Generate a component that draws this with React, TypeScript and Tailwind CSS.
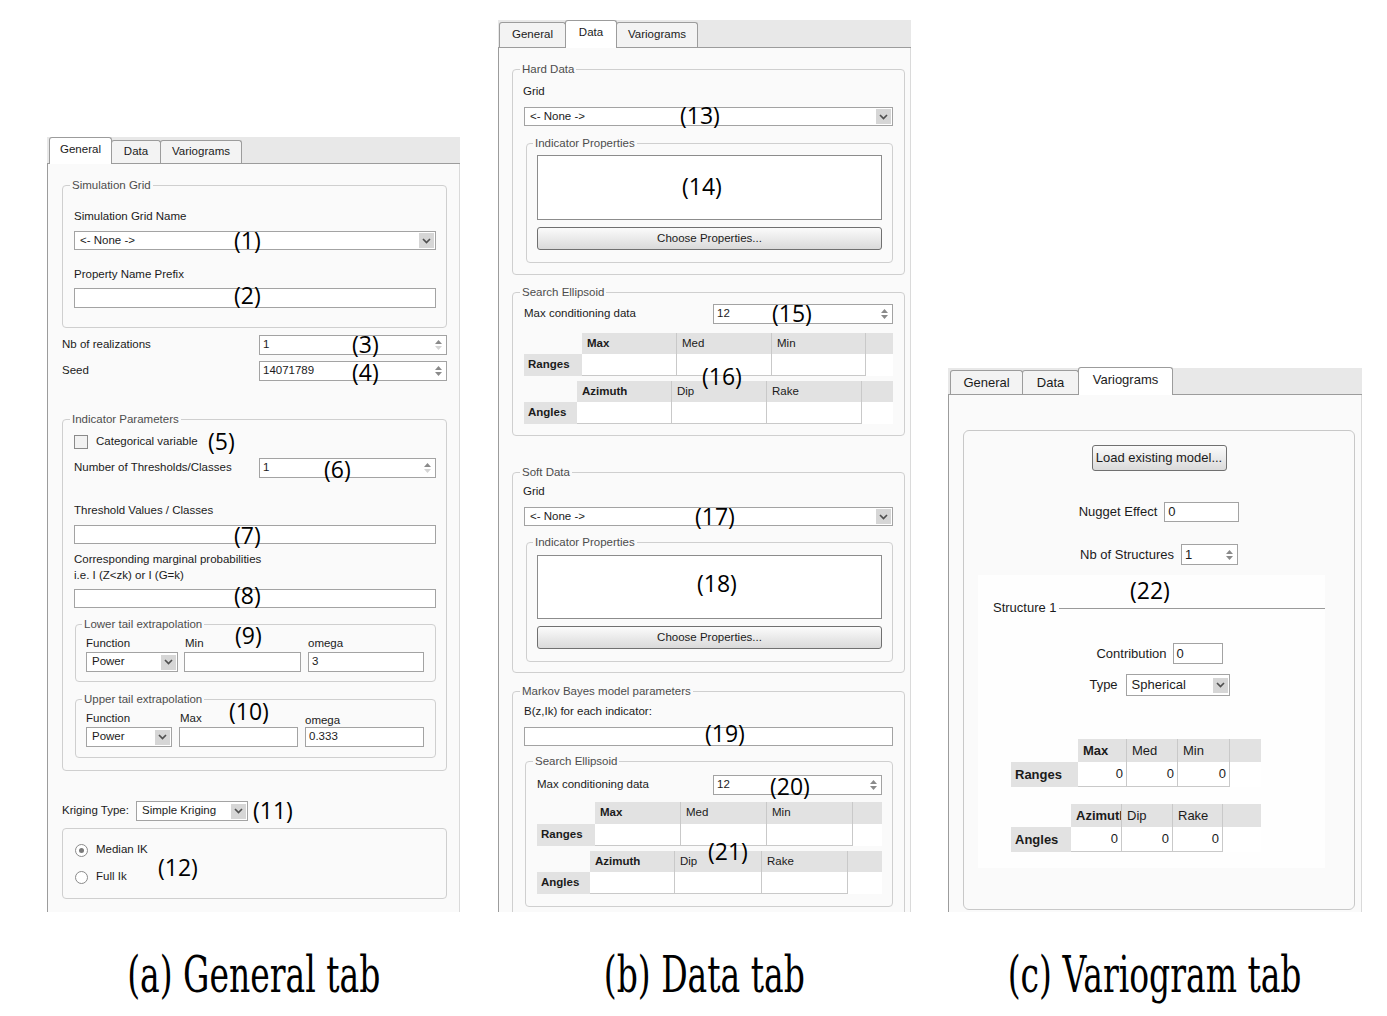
import React from 'react'

// small win-xp style widgets used by the three dialog tabs

function Chevron() {
  return (
    <svg width="9" height="6" viewBox="0 0 9 6">
      <path d="M1 1l3.5 3.5L8 1" stroke="#505050" strokeWidth="1.7" fill="none" />
    </svg>
  )
}

function Combo({ text, className = '' }: { text: string; className?: string }) {
  return (
    <div className={`flex items-center border border-[#a3a3a3] bg-white ${className}`}>
      <span className="flex-1 truncate pl-[5px]">{text}</span>
      <span className="mr-[1px] flex h-[15px] w-[15px] items-center justify-center bg-[#d6d6d6]">
        <Chevron />
      </span>
    </div>
  )
}

function Spin({ value, className = '', downOff }: { value: string; className?: string; downOff?: boolean }) {
  return (
    <div className={`flex items-center border border-[#a3a3a3] bg-white ${className}`}>
      <span className="flex-1 pl-[3px]">{value}</span>
      <svg width="9" height="14" viewBox="0 0 9 14" className="mr-[3px]">
        <path d="M4.5 2L8 6H1Z" fill="#8a8a8a" />
        <path d="M4.5 12L8 8H1Z" fill={downOff ? '#d4d4d4' : '#8a8a8a'} />
      </svg>
    </div>
  )
}

function Field({ value, className = '' }: { value?: string; className?: string }) {
  return <div className={`flex items-center border border-[#a3a3a3] bg-white pl-[3px] ${className}`}>{value}</div>
}

function Button({ label, className = '' }: { label: string; className?: string }) {
  return (
    <div className={`flex items-center justify-center rounded-[3px] border border-[#707070] bg-linear-to-b from-[#fbfbfb] to-[#dadada] ${className}`}>
      {label}
    </div>
  )
}

function Group({ title, legend, className = '', children }: { title: string; legend: string; className?: string; children: React.ReactNode }) {
  return (
    <fieldset className={`rounded-[4px] border border-[#cfcfcf] ${className}`}>
      <legend className={`px-[2px] leading-[14px] text-[#4d4d4d] ${legend}`}>{title}</legend>
      {children}
    </fieldset>
  )
}

type Col = { head: string; w: string }

function PropTable({ label, labelW, cols, fillW, headH, rowH, values }: {
  label: string
  labelW: string
  cols: Col[]
  fillW: string
  headH: string
  rowH: string
  values?: string[]
}) {
  return (
    <div>
      <div className={`flex ${headH}`}>
        <div className={labelW} />
        {cols.map((c, i) => (
          <div key={c.head} className={`${c.w} flex items-center overflow-hidden whitespace-nowrap border-r border-[#c9c9c9] bg-[#e2e2e2] pl-[5px] ${i === 0 ? 'font-bold' : ''}`}>
            {c.head}
          </div>
        ))}
        <div className={`${fillW} bg-[#e2e2e2]`} />
      </div>
      <div className={`flex ${rowH}`}>
        <div className={`${labelW} flex items-center bg-[#e2e2e2] pl-[4px] font-bold`}>{label}</div>
        {cols.map((c, i) => (
          <div key={c.head} className={`${c.w} flex items-center justify-end border-r border-b border-[#c9c9c9] bg-white pr-[3px]`}>
            {values?.[i]}
          </div>
        ))}
        <div className={`${fillW} bg-white`} />
      </div>
    </div>
  )
}

function Tabs({ active, widths, strip, on, off, pl }: { active: number; widths: string[]; strip: string; on: string; off: string; pl: string }) {
  const labels = ['General', 'Data', 'Variograms']
  return (
    <div className={`flex items-end border-b border-[#9c9c9c] bg-[#e8e8e8] ${strip} ${pl}`}>
      {labels.map((l, i) => (
        <div
          key={l}
          className={`${widths[i]} ${i > 0 ? '-ml-px' : ''} ${i === active ? `relative z-10 -mb-px bg-white pb-[3px] ${on}` : `bg-[#f3f3f3] ${off}`} flex items-center justify-center rounded-t-[3px] border border-b-0 border-[#9c9c9c]`}
        >
          {l}
        </div>
      ))}
    </div>
  )
}

function Mark({ n, className }: { n: number; className: string }) {
  return (
    <span className={`absolute font-['Open_Sans',sans-serif] text-[23px] leading-[24px] text-black ${className}`}>({n})</span>
  )
}

function Radio({ label, checked }: { label: string; checked?: boolean }) {
  return (
    <div className="flex h-[14px] items-center">
      <span className="flex h-[13px] w-[13px] items-center justify-center rounded-full border border-[#8a8a8a] bg-white">
        {checked && <span className="h-[5px] w-[5px] rounded-full bg-[#7a7a7a]" />}
      </span>
      <span className="ml-[8px]">{label}</span>
    </div>
  )
}

function GeneralTab() {
  return (
    <div className="relative flex h-[775px] w-[413px] flex-col">
      <Tabs
        active={0}
        widths={['w-[63px]', 'w-[50px]', 'w-[82px]']}
        strip="h-[27px]"
        on="h-[27px]"
        off="h-[23px]"
        pl="pl-[2px]"
      />
      <div className="flex-1 border-x border-l-[#9c9c9c] border-r-[#dadada] bg-[#fafafa] pl-[14px] pr-[12px]">
        <Group title="Simulation Grid" legend="ml-[7px]" className="mt-[14px]">
          <div className="pl-[11px] pr-[10px] pt-[17px] pb-[19px]">
            <div className="leading-[14px]">Simulation Grid Name</div>
            <Combo text="<- None ->" className="mt-[8px] h-[19px]" />
            <div className="mt-[17px] leading-[14px]">Property Name Prefix</div>
            <Field className="mt-[7px] h-[20px]" />
          </div>
        </Group>
        <div className="mt-[7px] flex h-[20px] items-center">
          <span className="flex-1">Nb of realizations</span>
          <Spin value="1" downOff className="h-[20px] w-[188px]" />
        </div>
        <div className="mt-[6px] flex h-[20px] items-center">
          <span className="flex-1">Seed</span>
          <Spin value="14071789" className="h-[20px] w-[188px]" />
        </div>
        <Group title="Indicator Parameters" legend="ml-[7px]" className="mt-[31px]">
          <div className="pl-[11px] pr-[10px] pt-[9px] pb-[12px]">
            <div className="flex h-[14px] items-center">
              <span className="h-[14px] w-[14px] border border-[#8a8a8a] bg-[#f2f2f2]" />
              <span className="ml-[8px]">Categorical variable</span>
            </div>
            <div className="mt-[9px] flex h-[20px] items-center">
              <span className="flex-1">Number of Thresholds/Classes</span>
              <Spin value="1" downOff className="h-[20px] w-[177px]" />
            </div>
            <div className="mt-[25px] leading-[14px]">Threshold Values / Classes</div>
            <Field className="mt-[8px] h-[19px]" />
            <div className="mt-[7px] leading-[16px]">
              Corresponding marginal probabilities
              <br />
              i.e. I (Z&lt;zk) or I (G=k)
            </div>
            <Field className="mt-[6px] h-[19px]" />
            <Group title="Lower tail extrapolation" legend="ml-[6px]" className="mt-[9px] ml-[1px]">
              <div className="pl-[10px] pt-[6px] pb-[9px]">
                <div className="flex h-[14px] items-center">
                  <span className="w-[98px]">Function</span>
                  <span className="w-[124px] pl-[1px]">Min</span>
                  <span>omega</span>
                </div>
                <div className="mt-[1px] flex h-[20px] gap-[6px]">
                  <Combo text="Power" className="w-[92px]" />
                  <Field className="w-[117px]" />
                  <Field value="3" className="ml-[1px] w-[116px]" />
                </div>
              </div>
            </Group>
            <Group title="Upper tail extrapolation" legend="ml-[6px]" className="mt-[10px] ml-[1px]">
              <div className="pl-[10px] pt-[6px] pb-[10px]">
                <div className="flex h-[14px] items-center">
                  <span className="w-[93px]">Function</span>
                  <span className="w-[126px] pl-[1px]">Max</span>
                  <span className="pt-[3px]">omega</span>
                </div>
                <div className="mt-[1px] flex h-[20px] gap-[7px]">
                  <Combo text="Power" className="w-[86px]" />
                  <Field className="w-[119px]" />
                  <Field value="0.333" className="w-[119px]" />
                </div>
              </div>
            </Group>
          </div>
        </Group>
        <div className="mt-[30px] flex h-[20px] items-center">
          <span className="w-[74px]">Kriging Type:</span>
          <Combo text="Simple Kriging" className="h-[20px] w-[112px]" />
        </div>
        <div className="mt-[7px] h-[71px] rounded-[4px] border border-[#cfcfcf] pl-[12px] pt-[14px]">
          <Radio label="Median IK" checked />
          <div className="mt-[13px]">
            <Radio label="Full Ik" />
          </div>
        </div>
      </div>
      <Mark n={1} className="left-[187px] top-[91px]" />
      <Mark n={2} className="left-[187px] top-[146px]" />
      <Mark n={3} className="left-[305px] top-[195px]" />
      <Mark n={4} className="left-[305px] top-[223px]" />
      <Mark n={5} className="left-[161px] top-[292px]" />
      <Mark n={6} className="left-[277px] top-[320px]" />
      <Mark n={7} className="left-[187px] top-[386px]" />
      <Mark n={8} className="left-[187px] top-[446px]" />
      <Mark n={9} className="left-[188px] top-[486px]" />
      <Mark n={10} className="left-[182px] top-[562px]" />
      <Mark n={11} className="left-[206px] top-[661px]" />
      <Mark n={12} className="left-[111px] top-[718px]" />
    </div>
  )
}

function DataTab() {
  return (
    <div className="relative ml-[38px] flex h-[892px] w-[413px] flex-col overflow-hidden">
      <Tabs
        active={1}
        widths={['w-[67px]', 'w-[52px]', 'w-[82px]']}
        strip="h-[28px]"
        on="h-[28px]"
        off="h-[25px]"
        pl="pl-[1px]"
      />
      <div className="flex-1 border-x border-l-[#9c9c9c] border-r-[#dadada] bg-[#fafafa] pl-[13px] pr-[5px]">
        <Group title="Hard Data" legend="ml-[7px]" className="mt-[14px]">
          <div className="pl-[11px] pr-[11px] pt-[8px] pb-[11px]">
            <div className="-ml-px leading-[14px]">Grid</div>
            <Combo text="<- None ->" className="mt-[9px] h-[19px]" />
            <Group title="Indicator Properties" legend="ml-[6px]" className="mt-[10px] ml-[2px]">
              <div className="pl-[10px] pr-[10px] pt-[5px] pb-[12px]">
                <div className="h-[65px] border border-[#8c8c8c] bg-white" />
                <Button label="Choose Properties..." className="mt-[7px] h-[23px]" />
              </div>
            </Group>
          </div>
        </Group>
        <Group title="Search Ellipsoid" legend="ml-[7px]" className="mt-[10px]">
          <div className="pl-[11px] pr-[11px] pt-[5px] pb-[11px]">
            <div className="flex h-[20px] items-center">
              <span className="flex-1">Max conditioning data</span>
              <Spin value="12" className="h-[20px] w-[180px]" />
            </div>
            <div className="mt-[9px]">
              <PropTable
                label="Ranges"
                labelW="w-[58px]"
                cols={[{ head: 'Max', w: 'w-[95px]' }, { head: 'Med', w: 'w-[95px]' }, { head: 'Min', w: 'w-[94px]' }]}
                fillW="w-[27px]"
                headH="h-[21px]"
                rowH="h-[22px]"
              />
            </div>
            <div className="mt-[5px]">
              <PropTable
                label="Angles"
                labelW="w-[53px]"
                cols={[{ head: 'Azimuth', w: 'w-[95px]' }, { head: 'Dip', w: 'w-[95px]' }, { head: 'Rake', w: 'w-[95px]' }]}
                fillW="w-[31px]"
                headH="h-[21px]"
                rowH="h-[22px]"
              />
            </div>
          </div>
        </Group>
        <Group title="Soft Data" legend="ml-[7px]" className="mt-[29px]">
          <div className="pl-[11px] pr-[11px] pt-[5px] pb-[10px]">
            <div className="-ml-px leading-[14px]">Grid</div>
            <Combo text="<- None ->" className="mt-[9px] h-[19px]" />
            <Group title="Indicator Properties" legend="ml-[6px]" className="mt-[9px] ml-[2px]">
              <div className="pl-[10px] pr-[10px] pt-[6px] pb-[12px]">
                <div className="h-[64px] border border-[#8c8c8c] bg-white" />
                <Button label="Choose Properties..." className="mt-[7px] h-[23px]" />
              </div>
            </Group>
          </div>
        </Group>
        <Group title="Markov Bayes model parameters" legend="ml-[7px]" className="mt-[11px]">
          <div className="pl-[11px] pr-[11px] pt-[6px] pb-[12px]">
            <div className="leading-[14px]">B(z,Ik) for each indicator:</div>
            <Field className="mt-[9px] h-[19px]" />
            <Group title="Search Ellipsoid" legend="ml-[7px]" className="mt-[8px] ml-[1px]">
              <div className="pl-[11px] pr-[10px] pt-[7px] pb-[12px]">
                <div className="flex h-[20px] items-center">
                  <span className="flex-1">Max conditioning data</span>
                  <Spin value="12" className="h-[20px] w-[169px]" />
                </div>
                <div className="mt-[7px]">
                  <PropTable
                    label="Ranges"
                    labelW="w-[58px]"
                    cols={[{ head: 'Max', w: 'w-[86px]' }, { head: 'Med', w: 'w-[86px]' }, { head: 'Min', w: 'w-[86px]' }]}
                    fillW="w-[29px]"
                    headH="h-[22px]"
                    rowH="h-[22px]"
                  />
                </div>
                <div className="mt-[5px]">
                  <PropTable
                    label="Angles"
                    labelW="w-[53px]"
                    cols={[{ head: 'Azimuth', w: 'w-[85px]' }, { head: 'Dip', w: 'w-[87px]' }, { head: 'Rake', w: 'w-[86px]' }]}
                    fillW="w-[34px]"
                    headH="h-[21px]"
                    rowH="h-[22px]"
                  />
                </div>
              </div>
            </Group>
          </div>
        </Group>
      </div>
      <Mark n={13} className="left-[182px] top-[83px]" />
      <Mark n={14} className="left-[184px] top-[154px]" />
      <Mark n={15} className="left-[274px] top-[281px]" />
      <Mark n={16} className="left-[204px] top-[344px]" />
      <Mark n={17} className="left-[197px] top-[484px]" />
      <Mark n={18} className="left-[199px] top-[551px]" />
      <Mark n={19} className="left-[207px] top-[701px]" />
      <Mark n={20} className="left-[272px] top-[754px]" />
      <Mark n={21} className="left-[210px] top-[819px]" />
    </div>
  )
}

function VariogramTab() {
  return (
    <div className="relative ml-[37px] flex h-[544px] w-[414px] flex-col text-[13px]">
      <Tabs
        active={2}
        widths={['w-[73px]', 'w-[57px]', 'w-[95px]']}
        strip="h-[27px]"
        on="h-[28px]"
        off="h-[24px]"
        pl="pl-[2px]"
      />
      <div className="flex-1 border-x border-l-[#9c9c9c] border-r-[#dadada] bg-[#fafafa] pl-[14px] pr-[6px]">
        <div className="mt-[35px] flex h-[480px] flex-col items-center rounded-[6px] border border-[#c8c8c8]">
          <Button label="Load existing model..." className="mt-[14px] h-[26px] w-[135px]" />
          <div className="mt-[31px] flex h-[20px] items-center gap-[7px]">
            <span>Nugget Effect</span>
            <Field value="0" className="h-[20px] w-[75px]" />
          </div>
          <div className="mt-[22px] flex h-[21px] items-center gap-[7px]">
            <span>Nb of Structures</span>
            <Spin value="1" className="h-[21px] w-[57px]" />
          </div>
          <div className="mt-[10px] ml-[14px] h-[293px] w-[347px] self-start bg-[#fefefe]">
            <div className="mt-[25px] flex h-[16px] items-center pl-[15px]">
              <span>Structure 1</span>
              <span className="ml-[2px] h-px flex-1 bg-[#9a9a9a]" />
            </div>
            <div className="mt-[27px] flex h-[21px] items-center justify-center gap-[6px] pl-[16px]">
              <span>Contribution</span>
              <Field value="0" className="h-[21px] w-[50px]" />
            </div>
            <div className="mt-[10px] flex h-[22px] items-center justify-center gap-[8px] pl-[16px]">
              <span>Type</span>
              <Combo text="Spherical" className="h-[22px] w-[104px]" />
            </div>
            <div className="mt-[43px] ml-[33px]">
              <PropTable
                label="Ranges"
                labelW="w-[67px]"
                cols={[{ head: 'Max', w: 'w-[49px]' }, { head: 'Med', w: 'w-[51px]' }, { head: 'Min', w: 'w-[52px]' }]}
                fillW="w-[31px]"
                headH="h-[23px]"
                rowH="h-[25px]"
                values={['0', '0', '0']}
              />
            </div>
            <div className="mt-[17px] ml-[33px]">
              <PropTable
                label="Angles"
                labelW="w-[60px]"
                cols={[{ head: 'Azimuth', w: 'w-[51px]' }, { head: 'Dip', w: 'w-[51px]' }, { head: 'Rake', w: 'w-[50px]' }]}
                fillW="w-[38px]"
                headH="h-[23px]"
                rowH="h-[25px]"
                values={['0', '0', '0']}
              />
            </div>
          </div>
        </div>
      </div>
      <Mark n={22} className="left-[182px] top-[210px]" />
    </div>
  )
}

export default function App() {
  const cap = "inline-block scale-x-[0.66] whitespace-nowrap font-['DejaVu_Serif',serif] text-[50px] leading-[60px] text-black"
  return (
    <div className="h-[1016px] w-[1387px] overflow-hidden bg-white font-['Liberation_Sans',Arial,sans-serif] text-[11.5px] text-[#1b1b1b]">
      <div className="flex h-[912px] items-end pl-[47px]">
        <GeneralTab />
        <DataTab />
        <VariogramTab />
      </div>
      <div className="flex pl-[47px] pt-[33px]">
        <div className="flex w-[413px] justify-center">
          <span className={cap}>(a) General tab</span>
        </div>
        <div className="ml-[38px] flex w-[413px] justify-center">
          <span className={cap}>(b) Data tab</span>
        </div>
        <div className="ml-[37px] flex w-[414px] justify-center">
          <span className={cap}>(c) Variogram tab</span>
        </div>
      </div>
    </div>
  )
}
